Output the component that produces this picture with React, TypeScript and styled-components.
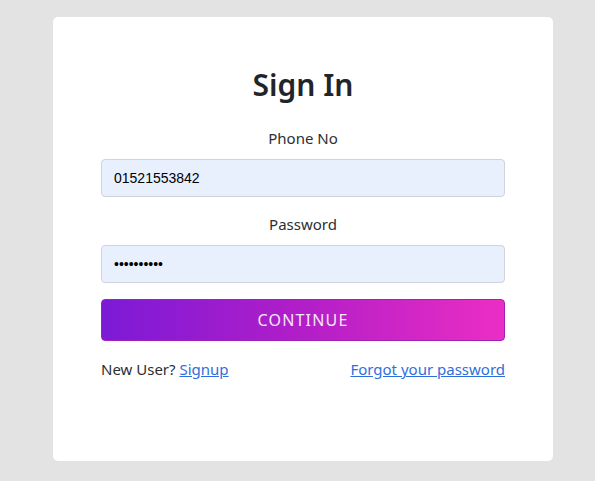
import styled, { createGlobalStyle } from "styled-components";

const GlobalStyle = createGlobalStyle`
  body {
    margin: 0;
    background: #e3e3e3;
    font-family: "Noto Sans", "Open Sans", sans-serif;
    color: #212529;
  }
`;

const Page = styled.div`
  padding: 17px 0 20px 53px;
`;

const Card = styled.form`
  width: 500px;
  height: 444px;
  box-sizing: border-box;
  background: #fff;
  border-radius: 5px;
  padding: 49px 48px 48px;
  display: flex;
  flex-direction: column;
`;

const Title = styled.h1`
  margin: 0 0 22px;
  font-size: 30px;
  line-height: 38px;
  font-weight: 600;
  text-align: center;
`;

const Label = styled.label`
  display: block;
  text-align: center;
  font-size: 15px;
  line-height: 24px;
  margin-bottom: 9px;
  color: #2b2f33;
`;

const Field = styled.div<{ $last?: boolean }>`
  margin-bottom: ${(p) => (p.$last ? "16px" : "15px")};
`;

const Input = styled.input`
  display: block;
  width: 100%;
  box-sizing: border-box;
  height: 38px;
  padding: 0 12px;
  border: 1px solid #ced4da;
  border-radius: 4px;
  background: #e8f0fe;
  font-family: "Liberation Sans", Arial, sans-serif;
  font-size: 14px;
  color: #000;
  outline: none;
`;

const Button = styled.button`
  height: 42px;
  width: 100%;
  border: 1px solid #a020b8;
  border-radius: 4px;
  background: linear-gradient(90deg, #7c1ad6 0%, #b21ec8 50%, #eb2ec4 100%);
  color: #f6e6f8;
  font-family: inherit;
  font-size: 16px;
  letter-spacing: 1.2px;
  text-transform: uppercase;
  cursor: pointer;
`;

const Footer = styled.div`
  margin-top: 16px;
  display: flex;
  justify-content: space-between;
  font-size: 15px;
  line-height: 24px;
  color: #2b2f33;
`;

const Link = styled.a`
  color: #2f6fdb;
  text-decoration: underline;
`;

export default function App() {
  return (
    <Page>
      <GlobalStyle />
      <Card onSubmit={(e) => e.preventDefault()}>
        <Title>Sign In</Title>
        <Field>
          <Label htmlFor="phone">Phone No</Label>
          <Input id="phone" type="text" defaultValue="01521553842" />
        </Field>
        <Field $last>
          <Label htmlFor="password">Password</Label>
          <Input id="password" type="password" defaultValue="1234567890" />
        </Field>
        <Button type="submit">Continue</Button>
        <Footer>
          <span>
            New User? <Link href="#">Signup</Link>
          </span>
          <Link href="#">Forgot your password</Link>
        </Footer>
      </Card>
    </Page>
  );
}
